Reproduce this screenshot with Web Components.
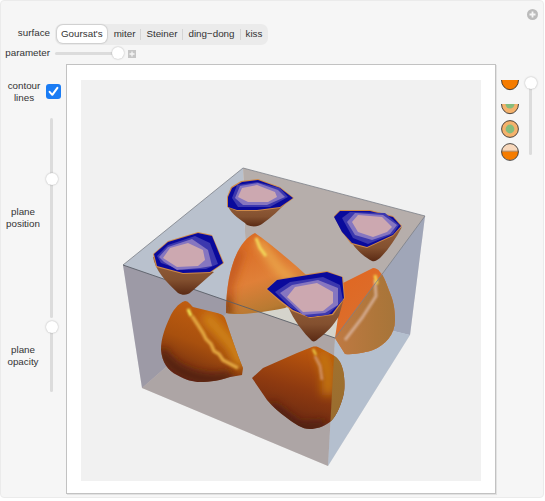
<!DOCTYPE html>
<html lang="en">
<head>
    <meta charset="UTF-8">
    <title>Goursat surfaces</title>
    <style>
        html, body {
            margin: 0;
            background: #fff;
        }
        body {
            font: 9.8px "Liberation Sans", Arial, sans-serif;
            color: #333;
        }
    </style>
</head>
<body>
    <demo-panel>
        <surface-tabs slot="tabs" selected="Goursat's" items="Goursat's|miter|Steiner|ding−dong|kiss"></surface-tabs>
        <demo-slider slot="param" length="63" at="63"></demo-slider>
        <surface-plot slot="plot"></surface-plot>
        <legend-icons slot="legend"></legend-icons>
    </demo-panel>

    <template id="panel-tpl">
        <style>
            :host {
                display: grid;
                box-sizing: border-box;
                width: 544px;
                height: 498px;
                background: #f6f6f6;
                border: 1px solid #ebebeb;
                border-radius: 4px;
                grid-template-columns: 65px 430px 1fr;
                grid-template-rows: 22px 22px 19px 430px;
                color: #333;
                position: relative;
            }
            .label { text-align: center; line-height: 12px; }
            .row { grid-column: 1 / -1; display: flex; align-items: center; }
            .row .label { width: 49px; text-align: right; margin-right: 5px; flex: none; }
            .row1 { grid-row: 2; }
            .row1 .label { margin-top: -2px; }
            .row2 { grid-row: 3; padding-bottom: 3px; box-sizing: border-box; }
            .row2 svg { margin-left: 10px; margin-top: 2px; display: block; }
            .side { grid-row: 4; grid-column: 1; position: relative; display: flex; flex-direction: column; }
            .check-row { display: flex; align-items: center; margin-top: 13px; height: 27px; }
            .check-row .label { width: 46px; margin-top: 2px; }
            .check {
                width: 15px; height: 15px; border-radius: 3px; background: #1a7cf4;
                flex: none; display: flex; align-items: center; justify-content: center; margin-top: 1px; margin-left: -1px;
            }
            .sliders { display: grid; grid-template-columns: 44px 14px; margin-top: 14px; }
            .sliders .label { align-self: start; }
            .plot { grid-row: 4; grid-column: 2; }
            .right { grid-row: 4; grid-column: 3; display: flex; }
            .add { position: absolute; right: 5px; top: 8px; width: 11px; height: 11px; }
        </style>
        <div class="row row1"><div class="label">surface</div><slot name="tabs"></slot></div>
        <div class="row row2">
            <div class="label">parameter</div>
            <slot name="param"></slot>
            <svg width="8" height="8" viewBox="0 0 8 8"><rect width="8" height="8" fill="#c6c6c6"/><path d="M4 1.5v5M1.5 4h5" stroke="#f6f6f6" stroke-width="1.3"/></svg>
        </div>
        <div class="side">
            <div class="check-row">
                <div class="label">contour<br>lines</div>
                <div class="check">
                    <svg width="11" height="11" viewBox="0 0 11 11"><path d="M1.6 5.8 4.3 8.8 9.4 1.8" fill="none" stroke="#fff" stroke-width="2" stroke-linecap="round" stroke-linejoin="round"/></svg>
                </div>
            </div>
            <div class="sliders">
                <div class="label" style="margin-top:88px;">plane<br>position</div>
                <demo-slider vertical length="200" at="61"></demo-slider>
                <div class="label" style="margin-top:26px;">plane<br>opacity</div>
                <demo-slider vertical length="68" at="3" style="margin-top:6px;"></demo-slider>
            </div>
        </div>
        <div class="plot"><slot name="plot"></slot></div>
        <div class="right"><slot name="legend"></slot></div>
        <svg class="add" viewBox="0 0 11 11"><circle cx="5.5" cy="5.5" r="5.5" fill="#bbb"/><path d="M5.5 2.5v6M2.5 5.5h6" stroke="#f6f6f6" stroke-width="1.8"/></svg>
    </template>

    <template id="tabs-tpl">
        <style>
            :host { display: flex; align-items: center; background: #ebebeb; border-radius: 7px; height: 21px; padding: 0 0 0 2px; width: 211px; }
            .t { padding: 0 5px; line-height: 18px; position: relative; white-space: nowrap; }
            .t + .t { margin-left: 1px; }
            .t.on { background: #fff; border-radius: 6px; box-shadow: 0 0 1px 1px #cfcfcf; padding: 0 4px; }
            .t.on + .t { padding-left: 6px; }
            .t.sep::before { content: ""; position: absolute; left: -1px; top: 4px; height: 11px; width: 1px; background: #d4d4d4; }
        </style>
    </template>

    <template id="slider-tpl">
        <style>
            :host { display: block; position: relative; }
            .track { position: absolute; background: #dcdcdc; border-radius: 2px; }
            .thumb {
                position: absolute; width: 12px; height: 12px; border-radius: 50%;
                background: #fff; box-shadow: 0 0 2px rgba(0, 0, 0, .3);
            }
        </style>
        <div class="track"></div>
        <div class="thumb"></div>
    </template>

    <template id="plot-tpl">
        <style>
            :host {
                display: block; box-sizing: border-box; width: 430px; height: 430px;
                background: #fff; border: 1px solid #c2c2c2;
                box-shadow: 1px 1px 0 #e2e2e2;
                padding: 15px 14px 12px 14px;
            }
            .view { width: 400px; height: 401px; background: #f1f1f1; overflow: hidden; }
            svg { display: block; }
        </style>
        <div class="view">
            <svg width="400" height="401" viewBox="81 80 400 401">
                <defs>
                    <filter id="b1" filterUnits="userSpaceOnUse" x="81" y="80" width="400" height="401"><feGaussianBlur stdDeviation="1.2"/></filter>
                    <filter id="b3" filterUnits="userSpaceOnUse" x="81" y="80" width="400" height="401"><feGaussianBlur stdDeviation="5"/></filter>
                    <linearGradient id="gE" x1=".2" y1="0" x2=".6" y2="1">
                        <stop offset="0" stop-color="#d8641e"/><stop offset=".55" stop-color="#e08038"/><stop offset=".85" stop-color="#b87a32"/><stop offset="1" stop-color="#8a5a20"/>
                    </linearGradient>
                    <linearGradient id="gF" x1="0" y1="0" x2=".6" y2="1">
                        <stop offset="0" stop-color="#e2641e"/><stop offset="1" stop-color="#d87434"/>
                    </linearGradient>
                    <linearGradient id="gFr" x1="0" y1="0" x2="1" y2="0">
                        <stop offset="0" stop-color="#c27a44"/><stop offset=".5" stop-color="#ae763a"/><stop offset="1" stop-color="#9a7238"/>
                    </linearGradient>
                    <linearGradient id="gG" x1=".7" y1="0" x2=".3" y2="1">
                        <stop offset="0" stop-color="#cc6410"/><stop offset=".55" stop-color="#a8500e"/><stop offset="1" stop-color="#642410"/>
                    </linearGradient>
                    <linearGradient id="gH" x1=".7" y1="0" x2=".4" y2="1">
                        <stop offset="0" stop-color="#c45c0c"/><stop offset=".5" stop-color="#8e3a10"/><stop offset="1" stop-color="#5e2412"/>
                    </linearGradient>
                    <linearGradient id="gHr" x1="0" y1="0" x2="0" y2="1">
                        <stop offset="0" stop-color="#b07a2c"/><stop offset="1" stop-color="#946a30"/>
                    </linearGradient>
                    <linearGradient id="cup" x1="0" y1="0" x2="0" y2="1">
                        <stop offset="0" stop-color="#96603c"/><stop offset=".6" stop-color="#83502f"/><stop offset="1" stop-color="#5a2a14"/>
                    </linearGradient>
                    <clipPath id="cE"><path d="M255 233C238 241 226 270 226 313 240 316 265 312 285 308L322 290C302 270 272 245 255 233Z"/></clipPath>
                    <clipPath id="cF"><path d="M373 268 343 283 335 338 345 354C355 355 367 352 373 350 385 345 395 335 395 320 395 308 393 300 390 293 387 285 384 276 380 272 378 269 376 268 373 268Z"/></clipPath>
                    <clipPath id="cG"><path d="M185 301C178 303 172 312 170 317 165 328 161 338 161 350 162 362 168 371 177 375 186 380 193 382 200 382 210 382 222 380 230 377L242 375 243 368C236 352 230 332 225 318 223 314 220 314 217 313L193 307C190 304 188 301 185 301Z"/></clipPath>
                    <clipPath id="cH"><path d="M252 378 263 368 297 353 312 347C316 346 318 347 320 348L333 355C338 358 341 362 343 370 345 380 345 390 343 397 340 408 335 418 330 422 323 427 316 429 310 429 302 429 295 424 287 418 279 412 273 407 267 400Z"/></clipPath>
                </defs>

                <!-- back walls and floor -->
                <polygon points="123,265 243,168 247,296 142,388" fill="#b9c1cd"/>
                <polygon points="243,168 425,216 410,335 247,296" fill="#b6aeab"/>
                <polygon points="142,388 247,296 410,335 328,466" fill="#d5d4cc"/>
                <!-- front faces -->
                <polygon points="123,265 335,338 328,466 142,388" fill="rgba(118,100,112,.42)"/>
                <polygon points="335,338 425,216 410,335 328,466" fill="rgba(120,151,208,.35)"/>

                <!-- blobs -->
                <g clip-path="url(#cE)">
                    <rect x="220" y="228" width="110" height="90" fill="url(#gE)"/>
                    <path d="M240 250 228 285 228 312" fill="none" stroke="#c0541a" stroke-width="9" filter="url(#b3)"/>
                    <path d="M258 240 278 268 296 284" fill="none" stroke="#eba84c" stroke-width="9" filter="url(#b3)"/>
                    <path d="M256 238 260 248 266 256" fill="none" stroke="#f2d65a" stroke-width="3" filter="url(#b1)"/>
                    <path d="M224 298 228 318" fill="none" stroke="#6a3810" stroke-width="7" filter="url(#b3)"/>
                </g>
                <g clip-path="url(#cF)">
                    <rect x="330" y="260" width="70" height="100" fill="url(#gF)"/>
                    <polygon points="335,338 425,216 410,335 328,466" fill="url(#gFr)"/>
                    <path d="M375 280 376 296 362 318 345 340" fill="none" stroke="#dcb8a4" stroke-width="3" opacity=".8" filter="url(#b1)"/>
                    <path d="M375 275 377 284" fill="none" stroke="#f4d450" stroke-width="3" filter="url(#b1)"/>
                </g>
                <g clip-path="url(#cG)">
                    <rect x="155" y="295" width="95" height="90" fill="url(#gG)"/>
                    <path d="M161 350C170 370 200 385 232 376" fill="none" stroke="#4a1a12" stroke-width="9" filter="url(#b3)"/>
                    <path d="M205 315 232 345 242 366" fill="none" stroke="#d08418" stroke-width="12" filter="url(#b3)"/>
                    <path d="M192 316 198 325 203 333 206 339 211 344 214 351 219 354 223 360 238 368" fill="none" stroke="#e2a640" stroke-width="3.6" filter="url(#b1)"/>
                    <path d="M188 309 191 316" stroke="#f2ea58" stroke-width="3" filter="url(#b1)"/>
                </g>
                <g clip-path="url(#cH)">
                    <rect x="250" y="345" width="100" height="90" fill="url(#gH)"/>
                    <path d="M322 352 328 372 328 395" fill="none" stroke="#c47610" stroke-width="12" filter="url(#b3)"/>
                    <path d="M270 405 300 428 325 425" fill="none" stroke="#471a12" stroke-width="8" filter="url(#b3)"/>
                    <polygon points="335,338 425,216 410,335 328,466" fill="url(#gHr)"/>
                    <path d="M315 356 320 366 322 380" fill="none" stroke="#d8a080" stroke-width="2.8" opacity=".75" filter="url(#b1)"/>
                    <path d="M313 349 316 355" stroke="#ecd04a" stroke-width="2.2" filter="url(#b1)"/>
                </g>

                <!-- box edges -->
                <path d="M123 265 243 168 425 216 335 338" fill="none" stroke="#7c8088" stroke-width=".8"/>
                <path d="M123 265 335 338" fill="none" stroke="#5a5f68" stroke-width=".9"/>

                <!-- cups with contour caps -->
                <g id="caps"></g>
            </svg>
        </div>
    </template>

    <template id="legend-tpl">
        <style>
            :host { display: flex; width: 44px; }
            .icons { width: 18px; display: flex; flex-direction: column; padding-top: 16px; margin-left: 5px; }
            svg { display: block; }
            demo-slider { margin-left: 5px; margin-top: 19px; }
        </style>
        <div class="icons">
            <svg width="18" height="11" viewBox="0 0 18 11"><path d="M.5 0H17.5A8.5 9.7 0 0 1 .5 0Z" fill="#f57c00"/><path d="M.5 0A8.5 9.7 0 0 0 17.5 0" fill="none" stroke="#222" stroke-width=".8"/></svg>
            <svg width="18" height="11" viewBox="0 0 18 11" style="margin-top:13px"><path d="M.5 0H17.5A8.5 9.7 0 0 1 .5 0Z" fill="#f5b26c"/><path d="M4.5 0H13.5A4.5 4.5 0 0 1 4.5 0Z" fill="#86bd7c"/><path d="M.5 0A8.5 9.7 0 0 0 17.5 0" fill="none" stroke="#222" stroke-width=".8"/></svg>
            <svg width="18" height="18" viewBox="0 0 18 18" style="margin-top:5px"><circle cx="9" cy="9" r="8.4" fill="#f5b26c" stroke="#222" stroke-width=".8"/><circle cx="9" cy="9" r="4.4" fill="#86bd7c"/></svg>
            <svg width="18" height="18" viewBox="0 0 18 18" style="margin-top:5px"><circle cx="9" cy="9" r="8.4" fill="#f8d8bc"/><path d="M.6 8.5H17.4A8.4 8.4 0 0 1 .6 8.5Z" fill="#f57c00"/><path d="M.6 8.2H17.4" stroke="#b08050" stroke-width="1"/><circle cx="9" cy="9" r="8.4" fill="none" stroke="#222" stroke-width=".8"/></svg>
        </div>
        <demo-slider vertical length="72" at="0"></demo-slider>
    </template>

    <script>
        function fromTemplate(el, id) {
            el.attachShadow({mode: 'open'});
            el.shadowRoot.append(document.getElementById(id).content.cloneNode(true));
        }

        class DemoPanel extends HTMLElement {
            constructor() {
                super();
                fromTemplate(this, 'panel-tpl');
            }
        }

        class SurfaceTabs extends HTMLElement {
            constructor() {
                super();
                fromTemplate(this, 'tabs-tpl');
            }
            connectedCallback() {
                const selected = this.getAttribute('selected');
                let prevOn = true;
                for (const name of this.getAttribute('items').split('|')) {
                    const t = document.createElement('div');
                    t.textContent = name;
                    t.className = 't';
                    if (name === selected) t.classList.add('on');
                    else if (!prevOn) t.classList.add('sep');
                    prevOn = name === selected;
                    this.shadowRoot.append(t);
                }
            }
        }

        class DemoSlider extends HTMLElement {
            constructor() {
                super();
                fromTemplate(this, 'slider-tpl');
            }
            connectedCallback() {
                const len = +this.getAttribute('length');
                const at = +this.getAttribute('at');
                const track = this.shadowRoot.querySelector('.track');
                const thumb = this.shadowRoot.querySelector('.thumb');
                if (this.hasAttribute('vertical')) {
                    this.style.width = '13px';
                    this.style.height = len + 'px';
                    track.style.cssText = `left:5px;top:0;width:3px;height:${len}px`;
                    thumb.style.cssText = `left:.5px;top:${at - 6}px`;
                } else {
                    this.style.width = len + 'px';
                    this.style.height = '13px';
                    track.style.cssText = `left:0;top:5px;height:3px;width:${len}px`;
                    thumb.style.cssText = `top:.5px;left:${at - 6}px`;
                }
            }
        }

        const CAPS = [
            {
                cup: 'M228 206C232 216 241 219 247 225 252 227 258 227 262 224 271 218 280 209 287 202Z',
                rings: [
                    ['#cf8a48', '227,197 231,187 241,181 258,179 280,187 294,198 280,208 257,211 237,211 227,207'],
                    ['#0a0a9c', '228,197 232,188 242,182 258,180 280,188 293,198 280,207 257,210 237,210 228,207'],
                    ['#3c38ae', '232,198 237,185 257,182 280,188 288,197 270,207 238,207'],
                    ['#8676c0', '235,198 240,186 258,183 278,190 285,197 267,205 243,205'],
                    ['#cca8b0', '238,197 242,188 257,185 275,192 277,197 268,202 248,202']
                ]
            },
            {
                cup: 'M153 257C155 270 166 282 178 293 183 296 188 295 191 292 199 285 206 279 214 272Z',
                rings: [
                    ['#cf8a48', '153,254 168,241 198,232 212,235 224,263 210,273 183,274 156,267'],
                    ['#0a0a9c', '154,254 168,242 198,233 212,236 223,263 210,272 183,273 157,266'],
                    ['#3c38ae', '157,256 168,245 195,236 210,243 218,264 206,269 182,270 161,263'],
                    ['#8676c0', '159,257 168,247 192,239 208,250 212,266 200,268 177,270 164,262'],
                    ['#cca8b0', '163,258 170,248 188,243 203,250 205,260 198,266 177,267']
                ]
            },
            {
                cup: 'M352 243C357 251 366 258 372 261 375 262 377 260 380 258 388 250 395 240 402 227L393 232Z',
                rings: [
                    ['#cf8a48', '334,216 340,210 370,210 393,216 402,226 393,236 367,248 351,244 342,232'],
                    ['#0a0a9c', '334,217 340,211 370,211 393,217 401,226 393,235 367,247 352,243 342,232'],
                    ['#3c38ae', '342,218 350,212 385,213 399,225 393,234 368,244 353,238'],
                    ['#8676c0', '347,222 355,213 383,215 397,225 390,234 372,240 355,235'],
                    ['#cca8b0', '352,222 358,215 382,217 392,227 387,232 373,237 358,232']
                ]
            },
            {
                cup: 'M288 306C293 320 304 333 312 341 314 342 316 341 318 339 326 333 334 325 339 316L344 298Z',
                rings: [
                    ['#cf8a48', '266,289 277,279 327,271 343,277 345,298 333,315 310,318 292,311 279,301'],
                    ['#0a0a9c', '267,289 277,280 327,272 342,277 344,298 332,314 310,317 293,310 280,300'],
                    ['#3c38ae', '275,292 290,282 323,277 340,285 343,300 328,315 308,317 290,307'],
                    ['#8676c0', '280,293 292,285 318,280 338,288 338,305 325,313 303,315'],
                    ['#cca8b0', '287,297 295,287 317,283 333,292 333,303 323,311 303,312']
                ]
            }
        ];

        class SurfacePlot extends HTMLElement {
            constructor() {
                super();
                fromTemplate(this, 'plot-tpl');
            }
            connectedCallback() {
                const ns = 'http://www.w3.org/2000/svg';
                const g = this.shadowRoot.getElementById('caps');
                for (const cap of CAPS) {
                    const cup = document.createElementNS(ns, 'path');
                    cup.setAttribute('d', cap.cup);
                    cup.setAttribute('fill', 'url(#cup)');
                    g.append(cup);
                    for (const [color, points] of cap.rings) {
                        const p = document.createElementNS(ns, 'polygon');
                        p.setAttribute('points', points);
                        p.setAttribute('fill', color);
                        g.append(p);
                    }
                }
            }
        }

        class LegendIcons extends HTMLElement {
            constructor() {
                super();
                fromTemplate(this, 'legend-tpl');
            }
        }

        customElements.define('demo-slider', DemoSlider);
        customElements.define('surface-tabs', SurfaceTabs);
        customElements.define('surface-plot', SurfacePlot);
        customElements.define('legend-icons', LegendIcons);
        customElements.define('demo-panel', DemoPanel);
    </script>
</body>
</html>
